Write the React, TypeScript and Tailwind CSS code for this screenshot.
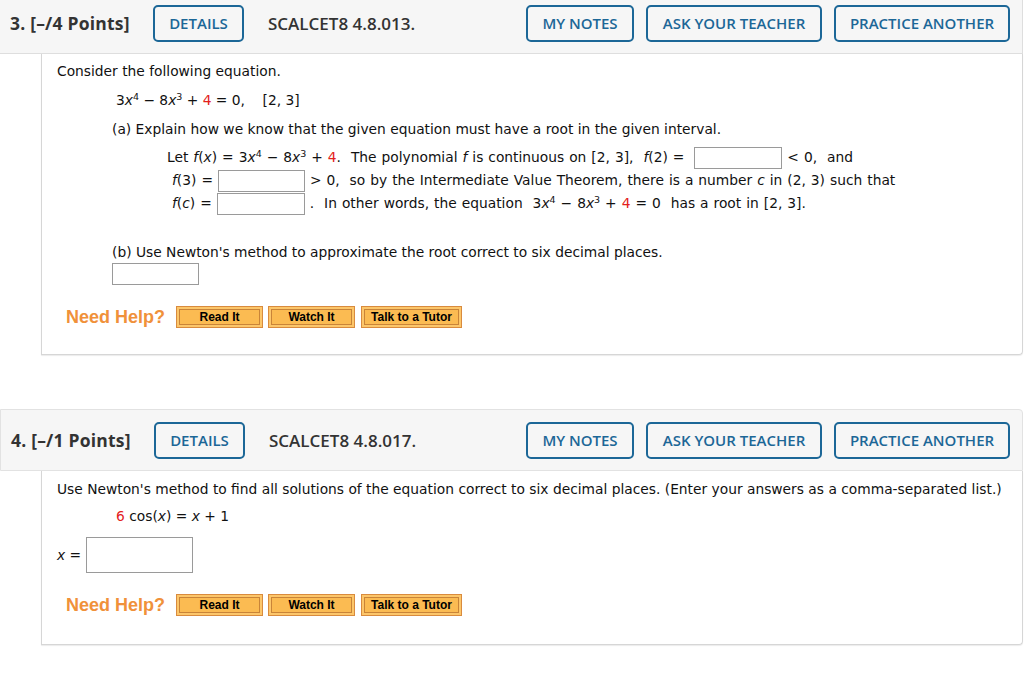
import React from "react";

const body = { fontFamily: '"DejaVu Sans", Verdana, sans-serif' };
const head = { fontFamily: '"Open Sans", "Noto Sans", sans-serif' };

function OutlineButton({ label, w }: { label: string; w: string }) {
  return (
    <div
      className={`flex h-[37px] ${w} items-center justify-center rounded-[5px] border-2 border-[#1c6797] text-[15px] font-semibold text-[#1c6797]`}
    >
      {label}
    </div>
  );
}

function QuestionHeader({ num, points, code, first }: { num: string; points: string; code: string; first?: boolean }) {
  return (
    <div
      style={head}
      className={
        first
          ? "flex w-[1023px] items-center border-b border-r border-[#dedede] bg-[#f6f6f6] pb-[11px] pt-[5px]"
          : "flex w-[1023px] items-center rounded-tr-[4px] border border-[#e2e2e2] bg-[#f6f6f6] pb-[11px] pt-[12px]"
      }
    >
      <div className="ml-[10px] w-[143px] text-[17.5px] font-bold tracking-[0.2px] text-[#333]">
        {num}. [–/{points} Points]
      </div>
      <OutlineButton label="DETAILS" w="w-[91px]" />
      <div className="ml-[24px] text-[17px] font-semibold text-[#333]">{code}</div>
      <div className="ml-auto mr-[12px] flex gap-[12px]">
        <OutlineButton label="MY NOTES" w="w-[108px]" />
        <OutlineButton label="ASK YOUR TEACHER" w="w-[176px]" />
        <OutlineButton label="PRACTICE ANOTHER" w="w-[176px]" />
      </div>
    </div>
  );
}

function HelpButton({ label, w }: { label: string; w: string }) {
  return (
    <div className={`h-[22px] ${w} border border-[#d98b3e] bg-[#fcc66a] p-[2px]`}>
      <div className="flex h-full items-center justify-center border border-[#c98438] bg-[#fbbb52] text-[12px] font-bold text-black">
        {label}
      </div>
    </div>
  );
}

function NeedHelp() {
  return (
    <div className="flex h-[22px] items-center" style={{ fontFamily: '"Liberation Sans", Arial, sans-serif' }}>
      <div className="ml-[9px] w-[110px] text-[18px] font-bold leading-[22px] text-[#f0913a]">Need Help?</div>
      <div className="flex gap-[5px]">
        <HelpButton label="Read It" w="w-[87px]" />
        <HelpButton label="Watch It" w="w-[87px]" />
        <div className="ml-[1px]">
          <HelpButton label="Talk to a Tutor" w="w-[101px]" />
        </div>
      </div>
    </div>
  );
}

function Box({ w, h = "h-[22px]" }: { w: string; h?: string }) {
  return <span className={`inline-block ${w} ${h} border border-[#9a9a9a] bg-white align-middle`} />;
}

const Red = ({ children }: { children: React.ReactNode }) => <span className="text-[#e3211c]">{children}</span>;
const Sup = ({ children }: { children: React.ReactNode }) => (
  <sup className="top-[-0.55em] text-[9.5px]">{children}</sup>
);

function Poly() {
  return (
    <span>
      3<i>x</i>
      <Sup>4</Sup> − 8<i>x</i>
      <Sup>3</Sup> + <Red>4</Red>
    </span>
  );
}

export default function App() {
  return (
    <div className="h-[675px] w-[1024px] overflow-hidden bg-white" style={body}>
      <QuestionHeader num="3" points="4" code="SCALCET8 4.8.013." first />
      <div className="ml-[41px] w-[982px] rounded-br-[4px] border-b border-l border-r border-[#d6d6d6] pb-[26px] pl-[15px] pt-[3px] text-[13.8px] text-[#111] shadow-[0_1px_1px_rgba(0,0,0,0.08)]">
        <div className="h-[29px] leading-[29px]">Consider the following equation.</div>
        <div className="ml-[59px] h-[29px] whitespace-pre leading-[29px]">
          <Poly /> = 0,{"    "}[2, 3]
        </div>
        <div className="ml-[55px] h-[29px] leading-[29px]">
          (a) Explain how we know that the given equation must have a root in the given interval.
        </div>
        <div className="ml-[110px] mt-[2px] [word-spacing:0.6px]">
          <div className="h-[23px] whitespace-pre leading-[23px]">
            Let <i>f</i>(<i>x</i>) = <Poly />.  The polynomial <i>f</i> is continuous on [2, 3],  <i>f</i>(2) ={"  "}
            <Box w="w-[88px]" /> &lt; 0,  and
          </div>
          <div className="h-[23px] whitespace-pre leading-[23px]">
            {" "}<i>f</i>(3) = <Box w="w-[87px]" /> &gt; 0,  so by the Intermediate Value Theorem, there is a number <i>c</i> in (2, 3) such that
          </div>
          <div className="h-[23px] whitespace-pre leading-[23px]">
            {" "}<i>f</i>(<i>c</i>) = <Box w="w-[88px]" /> .  In other words, the equation  <Poly /> = 0  has a root in [2, 3].
          </div>
        </div>
        <div className="ml-[55px] mt-[27px] h-[20px] leading-[20px]">
          (b) Use Newton's method to approximate the root correct to six decimal places.
        </div>
        <div className="ml-[55px] mt-[1px] flex">
          <Box w="w-[87px]" />
        </div>
        <div className="mt-[21px]">
          <NeedHelp />
        </div>
      </div>

      <div className="mt-[54px]">
        <QuestionHeader num="4" points="1" code="SCALCET8 4.8.017." />
      </div>
      <div className="ml-[41px] w-[982px] rounded-br-[4px] border-b border-l border-r border-[#d6d6d6] pb-[28px] pl-[15px] pt-[5px] text-[13.8px] text-[#111] shadow-[0_1px_1px_rgba(0,0,0,0.08)]">
        <div className="h-[27px] leading-[27px]">
          Use Newton's method to find all solutions of the equation correct to six decimal places. (Enter your answers as a comma-separated list.)
        </div>
        <div className="ml-[59px] h-[27px] whitespace-pre leading-[27px]">
          <Red>6</Red> cos(<i>x</i>) = <i>x</i> + 1
        </div>
        <div className="mt-[7px] flex items-center whitespace-pre">
          <span>
            <i>x</i> ={" "}
          </span>
          <Box w="w-[107px]" h="h-[36px]" />
        </div>
        <div className="mt-[21px]">
          <NeedHelp />
        </div>
      </div>
    </div>
  );
}
